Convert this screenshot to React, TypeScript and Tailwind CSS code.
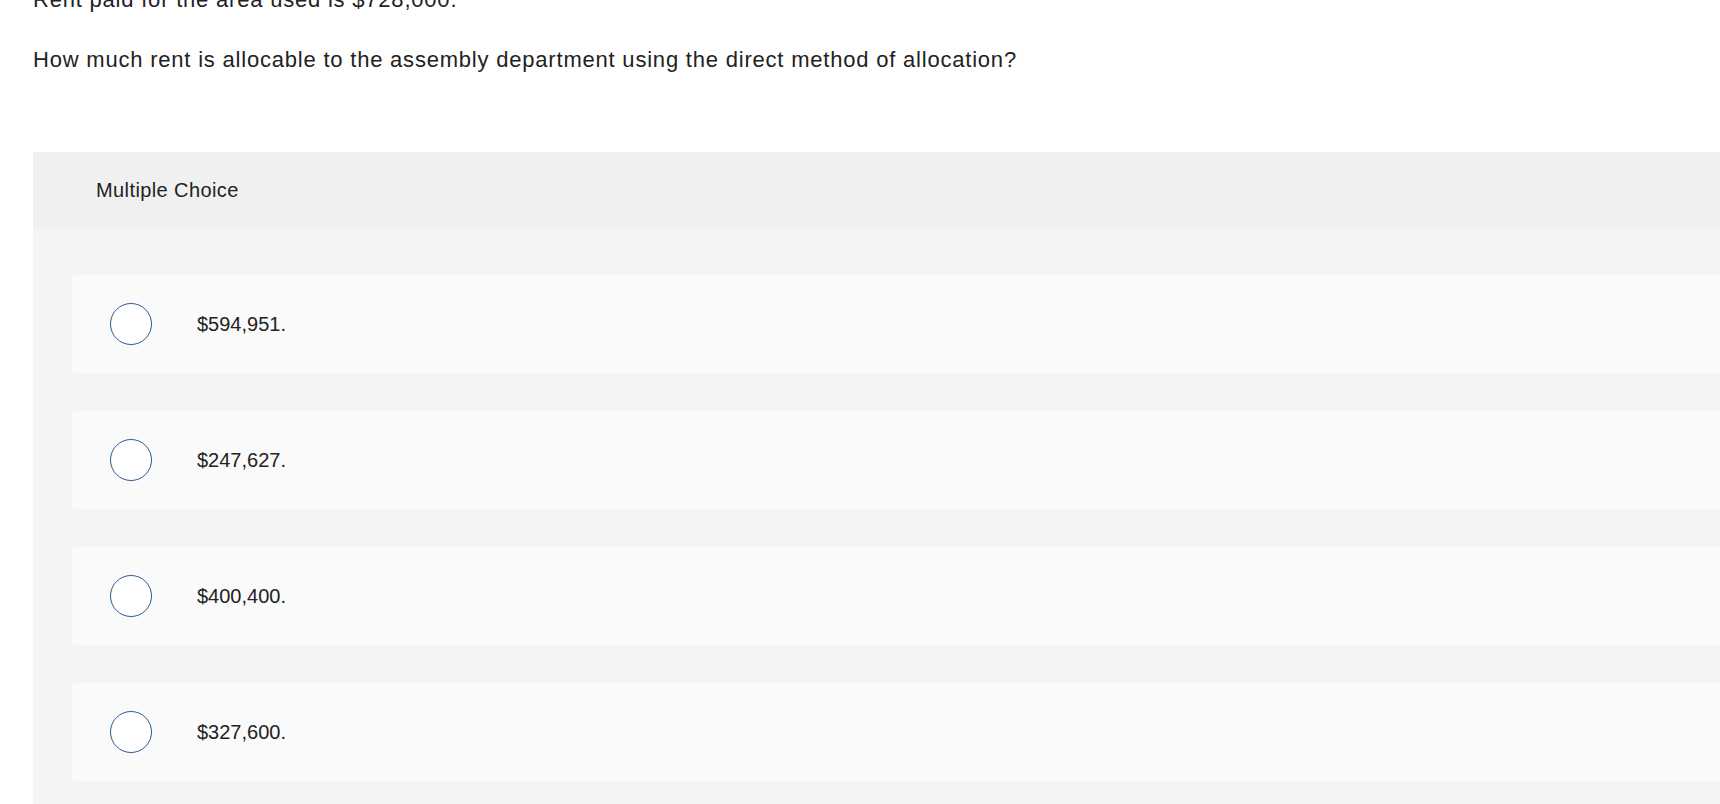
const options = ["$594,951.", "$247,627.", "$400,400.", "$327,600."];

export default function App() {
  return (
    <div className="h-[804px] w-[1720px] overflow-hidden bg-white font-['Liberation_Sans',Arial,sans-serif] text-[#222]">
      <div className="pl-[33px]">
        <p className="-mt-[15px] text-[22px] leading-[30px] tracking-[0.036em]">
          Rent paid for the area used is $728,000.
        </p>
        <p className="mt-[30px] text-[22px] leading-[30px] tracking-[0.036em]">
          How much rent is allocable to the assembly department using the direct method of allocation?
        </p>

        <div className="mt-[77px] w-[1800px] rounded-[3px] bg-[#f4f4f4]">
          <div className="flex h-[75px] items-center rounded-t-[3px] bg-[#f0f0f0] pl-[63px]">
            <span className="text-[20px] tracking-[0.02em]">Multiple Choice</span>
          </div>
          <div className="flex flex-col gap-[38px] px-[39px] pt-[48px] pb-[40px]">
            {options.map((opt) => (
              <label
                key={opt}
                className="flex h-[98px] cursor-pointer items-center rounded-[4px] bg-[#fafafa] pl-[38px]"
              >
                <span className="h-[42px] w-[42px] shrink-0 rounded-full border-[1.5px] border-[#2f5a95] bg-white" />
                <span className="ml-[45px] text-[20px]">{opt}</span>
              </label>
            ))}
          </div>
        </div>
      </div>
    </div>
  );
}
